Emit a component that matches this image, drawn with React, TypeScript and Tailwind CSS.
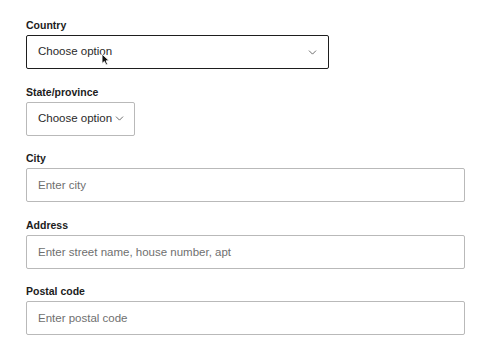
import { ChevronDown } from 'lucide-react';

const font = { fontFamily: '"Liberation Sans", Arial, sans-serif' };

const Label = ({ children }: { children: string }) => (
  <label className="block h-[14px] text-[10.5px] font-bold leading-[14px] text-[#1c1c1c]">
    {children}
  </label>
);

const Cursor = () => (
  <svg
    className="pointer-events-none absolute left-[101px] top-[53px]"
    width="9"
    height="13"
    viewBox="0 0 9 13"
  >
    <path d="M1 1 L1 10.5 L3.4 8.4 L5 12 L6.6 11.3 L5.1 7.8 L8.2 7.8 Z" fill="#111" stroke="#fff" strokeWidth="0.9" strokeLinejoin="round" />
  </svg>
);

export default function App() {
  const fields = [
    { label: 'City', placeholder: 'Enter city' },
    { label: 'Address', placeholder: 'Enter street name, house number, apt' },
    { label: 'Postal code', placeholder: 'Enter postal code' },
  ];

  return (
    <div className="relative h-[344px] w-[500px] overflow-hidden bg-white" style={font}>
      <div className="flex flex-col gap-[15.5px] pl-[26px] pr-[35px] pt-[18px]">
        <div className="flex flex-col gap-[3px]">
          <Label>Country</Label>
          <div className="flex h-[34px] w-[303px] items-center justify-between rounded-[2px] border border-[#1e1e1e] pl-[11px] pr-[9px]">
            <span className="text-[11.5px] text-[#2a2a2a]">Choose option</span>
            <ChevronDown size={13} strokeWidth={1.3} className="text-[#333]" />
          </div>
        </div>

        <div className="flex flex-col gap-[3px]">
          <Label>State/province</Label>
          <div className="flex h-[34px] w-[109px] items-center gap-[1px] rounded-[2px] border border-[#b9b9b9] pl-[11px]">
            <span className="text-[11.5px] text-[#2a2a2a]">Choose option</span>
            <ChevronDown size={13} strokeWidth={1.3} className="text-[#333]" />
          </div>
        </div>

        {fields.map((f) => (
          <div key={f.label} className="flex flex-col gap-[3px]">
            <Label>{f.label}</Label>
            <input
              placeholder={f.placeholder}
              className="h-[34px] w-full rounded-[2px] border border-[#b9b9b9] pl-[11px] text-[11.5px] text-[#2a2a2a] outline-none placeholder:text-[#6f6f6f]"
              style={font}
            />
          </div>
        ))}
      </div>
      <Cursor />
    </div>
  );
}
